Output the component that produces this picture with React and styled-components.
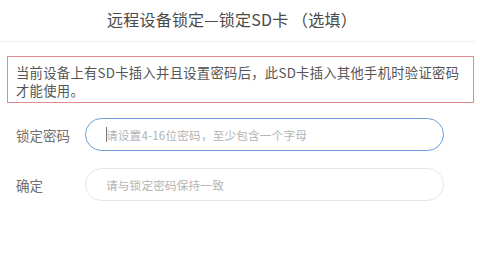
import React from 'react'
import styled, { createGlobalStyle } from 'styled-components'

const GlobalStyle = createGlobalStyle`
  html, body {
    margin: 0;
    padding: 0;
    background: #ffffff;
  }
  body {
    font-family: "Noto Sans CJK SC", "Liberation Sans", sans-serif;
  }
`

const Page = styled.div`
  width: 480px;
  height: 256px;
  overflow: hidden;
  background: #fff;
`

const Header = styled.div`
  height: 42px;
  margin-right: 5px;
  border-bottom: 1px solid #f0f0f0;
  display: flex;
  align-items: center;
  justify-content: center;
  box-sizing: border-box;
  padding-right: 11px;
  padding-bottom: 4px;
`

const Title = styled.h2`
  margin: 0;
  font-size: 16px;
  letter-spacing: 0.2px;
  font-weight: 400;
  color: #4a4a4a;
`

const Body = styled.div`
  padding: 14px 6px 0 7px;
`

const Notice = styled.div`
  border: 1px solid #e28a8e;
  padding: 7px 10px 2px 8px;
  font-size: 13.3px;
  letter-spacing: 0.3px;
  line-height: 18px;
  color: #555;
  box-sizing: border-box;
  height: 47px;
`

const Form = styled.div`
  display: flex;
  flex-direction: column;
  gap: 17px;
  margin-top: 15px;
  padding-left: 9px;
`

const Row = styled.div`
  display: flex;
  align-items: center;
`

const Label = styled.label`
  width: 69px;
  flex: none;
  font-size: 13.5px;
  color: #707070;
`

const Field = styled.div`
  position: relative;
  width: 359px;
  height: 33px;
`

const Input = styled.input`
  width: 100%;
  height: 100%;
  box-sizing: border-box;
  border: 1px solid ${(p) => (p.$active ? '#6b9fd8' : '#e6e6e6')};
  border-radius: 17px;
  padding: 0 0 0 20px;
  font-family: inherit;
  font-size: 11.6px;
  letter-spacing: 0.2px;
  outline: none;
  background: #fff;
  &::placeholder {
    color: #b4b4b4;
  }
`

const Caret = styled.span`
  position: absolute;
  left: 21px;
  top: 9px;
  width: 1px;
  height: 15px;
  background: #777;
`

export default function App() {
  return (
    <Page>
      <GlobalStyle />
      <Header>
        <Title>远程设备锁定—锁定SD卡 （选填）</Title>
      </Header>
      <Body>
        <Notice>
          当前设备上有SD卡插入并且设置密码后，此SD卡插入其他手机时验证密码才能使用。
        </Notice>
        <Form>
          <Row>
            <Label>锁定密码</Label>
            <Field>
              <Input $active placeholder="请设置4-16位密码，至少包含一个字母" />
              <Caret />
            </Field>
          </Row>
          <Row>
            <Label>确定</Label>
            <Field>
              <Input placeholder="请与锁定密码保持一致" />
            </Field>
          </Row>
        </Form>
      </Body>
    </Page>
  )
}
